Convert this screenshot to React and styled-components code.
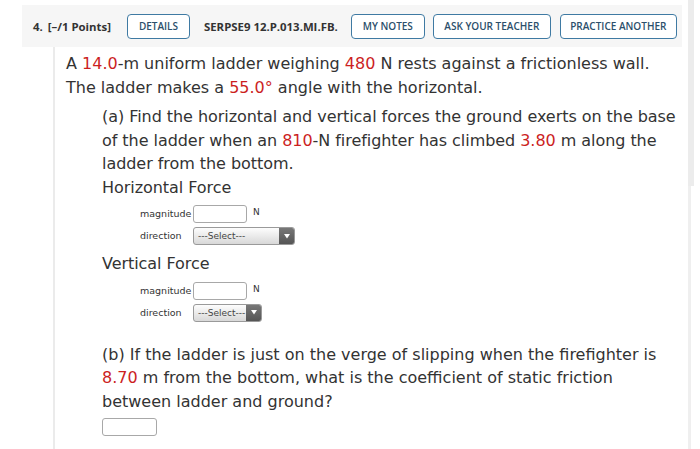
import React from "react";
import styled, { createGlobalStyle } from "styled-components";

const Global = createGlobalStyle`
  html, body { margin: 0; padding: 0; background: #fff; }
  body { font-family: "DejaVu Sans", Verdana, sans-serif; color: #333; }
`;

const Page = styled.div`
  display: flex;
  width: 700px;
  height: 449px;
  overflow: hidden;
`;

const Main = styled.div`
  width: 660px;
  padding: 5px 0 0 22px;
  flex: none;
`;

const Scroll = styled.div`
  margin-left: 6px;
  width: 6px;
  display: flex;
  flex-direction: column;
`;

const Thumb = styled.div`
  height: 186px;
  width: 6px;
  background: #ececec;
`;

const Track = styled.div`
  flex: 1;
  width: 3px;
  background: #efefef;
`;

const Header = styled.div`
  height: 42px;
  background: #f6f6f6;
  display: flex;
  align-items: center;
  padding-left: 11px;
  font-family: "Open Sans", sans-serif;
  font-weight: 700;
  font-size: 11.4px;
  color: #333;
`;

const Num = styled.span`
  margin-right: 5px;
`;

const Points = styled.span`
  margin-right: 16px;
`;

const Code = styled.span`
  margin: 0 13px 0 14px;
`;

const Btn = styled.div`
  height: 25px;
  box-sizing: border-box;
  width: ${(p) => p.$w}px;
  margin-left: ${(p) => p.$ml || 0}px;
  border: 1.5px solid #3f7aa3;
  border-radius: 4px;
  display: flex;
  align-items: center;
  justify-content: center;
  font-family: "Open Sans", sans-serif;
  font-weight: 600;
  font-size: 10px;
  color: #2c4f6b;
  background: #fff;
`;

const Body = styled.div`
  margin-left: 31px;
  border-left: 2px solid #ebebeb;
  padding: 5px 0 20px 11px;
  font-size: 16px;
  line-height: 23.5px;
  color: #333;
`;

const P = styled.p`
  margin: 0;
`;

const Part = styled.div`
  margin: 6px 0 0 36px;
  letter-spacing: -0.05px;
`;

const Red = styled.span`
  color: #cc1f1f;
`;

const Fields = styled.div`
  margin: 6px 0 0 38px;
  display: grid;
  grid-template-columns: 53px auto;
  row-gap: 4px;
  align-items: center;
  font-size: 9.5px;
  line-height: 18px;
  letter-spacing: 0;
`;

const Label = styled.span``;

const InputRow = styled.div`
  display: flex;
  align-items: center;
  gap: 6px;
`;

const Box = styled.div`
  width: ${(p) => p.$w || 54}px;
  height: 18px;
  box-sizing: border-box;
  border: 1px solid #a8a8a8;
  border-radius: 3px;
  background: #fff;
`;

const Unit = styled.span`
  font-size: 9px;
  margin-top: -4px;
`;

const Select = styled.div`
  width: ${(p) => p.$w}px;
  height: 18px;
  box-sizing: border-box;
  border: 1px solid #9a9a9a;
  border-radius: 3px;
  display: flex;
  overflow: hidden;
  background: linear-gradient(#fdfdfd, #d8d8d8);
`;

const SelText = styled.span`
  flex: 1;
  padding-left: 4px;
  font-size: 9px;
  line-height: 16px;
  color: #444;
`;

const Arrow = styled.span`
  width: 15px;
  background: linear-gradient(#777, #555);
  display: flex;
  align-items: center;
  justify-content: center;
`;

const SubHead = styled.div`
  margin-top: ${(p) => p.$mt || 0}px;
`;

const PartB = styled.div`
  margin: 21px 0 0 36px;
`;

const AnswerBox = styled(Box)`
  margin-top: 5px;
`;

const Tri = () => (
  <svg width="6" height="5" viewBox="0 0 6 5">
    <path d="M0 0 L6 0 L3 4.5 Z" fill="#fff" />
  </svg>
);

const SelectBox = ({ w }) => (
  <Select $w={w}>
    <SelText>---Select---</SelText>
    <Arrow>
      <Tri />
    </Arrow>
  </Select>
);

const ForceFields = ({ selW }) => (
  <Fields>
    <Label>magnitude</Label>
    <InputRow>
      <Box />
      <Unit>N</Unit>
    </InputRow>
    <Label>direction</Label>
    <InputRow>
      <SelectBox w={selW} />
    </InputRow>
  </Fields>
);

export default function App() {
  return (
    <Page>
      <Global />
      <Main>
        <Header>
          <Num>4.</Num>
          <Points>[–/1 Points]</Points>
          <Btn $w={63}>DETAILS</Btn>
          <Code>SERPSE9 12.P.013.MI.FB.</Code>
          <Btn $w={74}>MY NOTES</Btn>
          <Btn $w={118} $ml={8}>ASK YOUR TEACHER</Btn>
          <Btn $w={117} $ml={9}>PRACTICE ANOTHER</Btn>
        </Header>
        <Body>
          <P>
            A <Red>14.0</Red>-m uniform ladder weighing <Red>480</Red> N rests against a frictionless wall.
            The ladder makes a <Red>55.0°</Red> angle with the horizontal.
          </P>
          <Part>
            <P>
              (a) Find the horizontal and vertical forces the ground exerts on the base of the ladder
              when an <Red>810</Red>-N firefighter has climbed <Red>3.80</Red> m along the ladder from the
              bottom.
            </P>
            <SubHead>Horizontal Force</SubHead>
            <ForceFields selW={102} />
            <SubHead $mt={7}>Vertical Force</SubHead>
            <ForceFields selW={69} />
          </Part>
          <PartB>
            <P>
              (b) If the ladder is just on the verge of slipping when the firefighter is{" "}
              <Red>8.70</Red> m from the bottom, what is the coefficient of static friction between
              ladder and ground?
            </P>
            <AnswerBox $w={55} />
          </PartB>
        </Body>
      </Main>
      <Scroll>
        <Thumb />
        <Track />
      </Scroll>
    </Page>
  );
}
